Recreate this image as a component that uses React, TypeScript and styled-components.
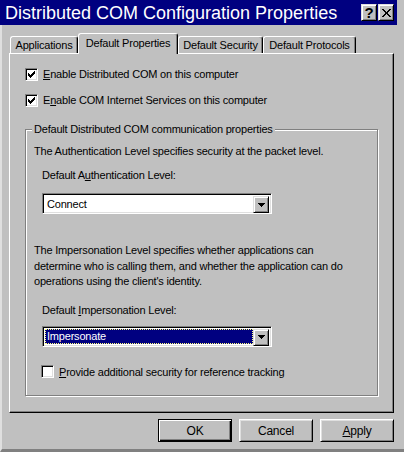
import React from 'react';
import styled, { createGlobalStyle } from 'styled-components';

const GlobalStyle = createGlobalStyle`
  html, body {
    margin: 0;
    padding: 0;
    background: #c0c0c0;
  }
  * {
    box-sizing: border-box;
  }
`;

const Window = styled.div`
  width: 404px;
  height: 452px;
  background: #c0c0c0;
  font-family: 'Liberation Sans', Arial, sans-serif;
  font-size: 11px;
  letter-spacing: -0.2px;
  color: #000;
  display: flex;
  flex-direction: column;
  overflow: hidden;
`;

const TitleBar = styled.div`
  height: 25px;
  margin-right: 7px;
  background: #000080;
  display: flex;
  align-items: center;
  padding: 0 3px 0 5px;
`;

const Title = styled.div`
  flex: 1;
  color: #fff;
  font-size: 18px;
  letter-spacing: 0;
  line-height: 25px;
  padding-top: 1px;
  white-space: nowrap;
`;

const CaptionButton = styled.div`
  width: 16px;
  height: 17px;
  margin-left: 1px;
  background: #c0c0c0;
  border: 1px solid;
  border-color: #dfdfdf #000 #000 #dfdfdf;
  box-shadow: inset 1px 1px #fff, inset -1px -1px #808080;
  display: flex;
  align-items: center;
  justify-content: center;
  font-size: 15px;
  font-weight: bold;
  letter-spacing: 0;
  line-height: 1;
`;

const Body = styled.div`
  flex: 1;
  border-left: 2px solid #dfdfdf;
  border-bottom: 3px solid #808080;
  padding: 8px 10px 0 7px;
  display: flex;
  flex-direction: column;
`;

const TabStrip = styled.div`
  height: 21px;
  display: flex;
  align-items: flex-end;
  padding-left: 1px;
`;

const Tab = styled.div<{ $w: number; $active?: boolean }>`
  position: relative;
  width: ${(p) => p.$w}px;
  height: ${(p) => (p.$active ? 21 : 17)}px;
  margin-bottom: ${(p) => (p.$active ? 0 : 1)}px;
  z-index: ${(p) => (p.$active ? 1 : 0)};
  background: #c0c0c0;
  border-top: 1px solid #fff;
  border-left: 1px solid #fff;
  border-right: 1px solid #000;
  border-radius: 3px 3px 0 0;
  box-shadow: inset -1px 0 #808080;
  display: flex;
  align-items: center;
  justify-content: center;
  padding-bottom: ${(p) => (p.$active ? 2 : 0)}px;
  white-space: nowrap;
`;

const Panel = styled.div`
  margin-top: -1px;
  width: 385px;
  height: 360px;
  border-top: 1px solid #fff;
  border-left: 1px solid #fff;
  border-right: 1px solid #000;
  border-bottom: 1px solid #000;
  box-shadow: inset -1px -1px #808080;
  padding: 13px 15px 0 15px;
  display: flex;
  flex-direction: column;
`;

const CheckRow = styled.label<{ $top?: number; $indent?: number }>`
  display: flex;
  align-items: center;
  height: 14px;
  margin-top: ${(p) => p.$top ?? 0}px;
  margin-left: ${(p) => p.$indent ?? 0}px;
  gap: 5px;
  white-space: nowrap;
`;

const Box = styled.span`
  width: 13px;
  height: 13px;
  background: #fff;
  border: 1px solid;
  border-color: #808080 #fff #fff #808080;
  box-shadow: inset 1px 1px #000, inset -1px -1px #dfdfdf;
  display: flex;
  align-items: center;
  justify-content: center;
`;

const GroupBox = styled.fieldset`
  margin: 15px 0 0 0;
  height: 274px;
  border: 1px solid #808080;
  box-shadow: inset 1px 1px #fff, 1px 1px #fff;
  padding: 0 8px 0 8px;
  display: flex;
  flex-direction: column;
`;

const GroupLabel = styled.legend`
  padding: 0 2px;
  margin-left: -2px;
  line-height: 14px;
  background: #c0c0c0;
`;

const Text = styled.div<{ $top: number; $indent?: number; $lh?: number }>`
  margin-top: ${(p) => p.$top}px;
  margin-left: ${(p) => p.$indent ?? 0}px;
  line-height: ${(p) => p.$lh ?? 14}px;
  white-space: nowrap;
`;

const Combo = styled.div<{ $top: number }>`
  margin-top: ${(p) => p.$top}px;
  margin-left: 8px;
  width: 230px;
  height: 21px;
  background: #fff;
  border: 1px solid;
  border-color: #808080 #fff #fff #808080;
  box-shadow: inset 1px 1px #000, inset -1px -1px #dfdfdf;
  padding: 2px;
  display: flex;
`;

const ComboField = styled.div<{ $selected?: boolean }>`
  flex: 1;
  display: flex;
  align-items: center;
  padding-left: 2px;
  background: ${(p) => (p.$selected ? '#000080' : '#fff')};
  color: ${(p) => (p.$selected ? '#fff' : '#000')};
  outline: ${(p) => (p.$selected ? '1px dotted #ffff80' : 'none')};
  outline-offset: -1px;
`;

const ComboArrow = styled.div`
  width: 16px;
  height: 17px;
  background: #c0c0c0;
  border: 1px solid;
  border-color: #dfdfdf #000 #000 #dfdfdf;
  box-shadow: inset 1px 1px #fff, inset -1px -1px #808080;
  display: flex;
  align-items: center;
  justify-content: center;
`;

const ButtonRow = styled.div`
  margin-top: 6px;
  display: flex;
  justify-content: flex-end;
  gap: 7px;
`;

const Button = styled.div<{ $default?: boolean }>`
  width: 74px;
  height: 23px;
  background: #c0c0c0;
  border: 1px solid;
  border-color: ${(p) => (p.$default ? '#000' : '#fff #000 #000 #fff')};
  box-shadow: ${(p) =>
    p.$default
      ? 'inset 1px 1px #fff, inset -1px -1px #000, inset -2px -2px #808080'
      : 'inset 1px 1px #dfdfdf, inset -1px -1px #808080'};
  display: flex;
  align-items: center;
  justify-content: center;
  font-size: 12px;
`;

const U = styled.span`
  text-decoration: underline;
  text-underline-offset: 1px;
`;

function CheckMark() {
  return (
    <svg width="7" height="7" viewBox="0 0 7 7" shapeRendering="crispEdges">
      <path
        d="M6 0h1v3h-1zM5 1h1v3h-1zM4 2h1v3h-1zM0 2h1v3h-1zM1 3h1v3h-1zM2 4h1v3h-1zM3 3h1v3h-1z"
        fill="#000"
      />
    </svg>
  );
}

function Check({ checked }: { checked?: boolean }) {
  return <Box>{checked && <CheckMark />}</Box>;
}

function DownArrow() {
  return (
    <svg width="7" height="4" viewBox="0 0 7 4" shapeRendering="crispEdges">
      <path d="M0 0h7v1h-7zM1 1h5v1h-5zM2 2h3v1h-3zM3 3h1v1h-1z" fill="#000" />
    </svg>
  );
}

export default function App() {
  return (
    <>
      <GlobalStyle />
      <Window>
        <TitleBar>
          <Title>Distributed COM Configuration Properties</Title>
          <CaptionButton>?</CaptionButton>
          <CaptionButton>
            <svg width="9" height="8" viewBox="0 0 9 8" shapeRendering="crispEdges">
              <path
                d="M0 0h2l2.5 3 2.5-3h2l-3.5 4 3.5 4h-2l-2.5-3-2.5 3h-2l3.5-4z"
                fill="#000"
              />
            </svg>
          </CaptionButton>
        </TitleBar>
        <Body>
          <TabStrip>
            <Tab $w={68}>Applications</Tab>
            <Tab $w={100} $active>
              Default Properties
            </Tab>
            <Tab $w={85}>Default Security</Tab>
            <Tab $w={93}>Default Protocols</Tab>
          </TabStrip>
          <Panel>
            <CheckRow>
              <Check checked />
              <span>
                <U>E</U>nable Distributed COM on this computer
              </span>
            </CheckRow>
            <CheckRow $top={12}>
              <Check checked />
              <span>
                E<U>n</U>able COM Internet Services on this computer
              </span>
            </CheckRow>
            <GroupBox>
              <GroupLabel>Default Distributed COM communication properties</GroupLabel>
              <Text $top={8}>
                The Authentication Level specifies security at the packet level.
              </Text>
              <Text $top={10} $indent={8}>
                Default A<U>u</U>thentication Level:
              </Text>
              <Combo $top={11}>
                <ComboField>Connect</ComboField>
                <ComboArrow>
                  <DownArrow />
                </ComboArrow>
              </Combo>
              <Text $top={29} $lh={15.5}>
                The Impersonation Level specifies whether applications can
                <br />
                determine who is calling them, and whether the application can do
                <br />
                operations using the client's identity.
              </Text>
              <Text $top={13} $indent={8}>
                Default <U>I</U>mpersonation Level:
              </Text>
              <Combo $top={9}>
                <ComboField $selected>Impersonate</ComboField>
                <ComboArrow>
                  <DownArrow />
                </ComboArrow>
              </Combo>
              <CheckRow $top={18} $indent={7}>
                <Check />
                <span>
                  <U>P</U>rovide additional security for reference tracking
                </span>
              </CheckRow>
            </GroupBox>
          </Panel>
          <ButtonRow>
            <Button $default>OK</Button>
            <Button>Cancel</Button>
            <Button>
              <span>
                <U>A</U>pply
              </span>
            </Button>
          </ButtonRow>
        </Body>
      </Window>
    </>
  );
}
